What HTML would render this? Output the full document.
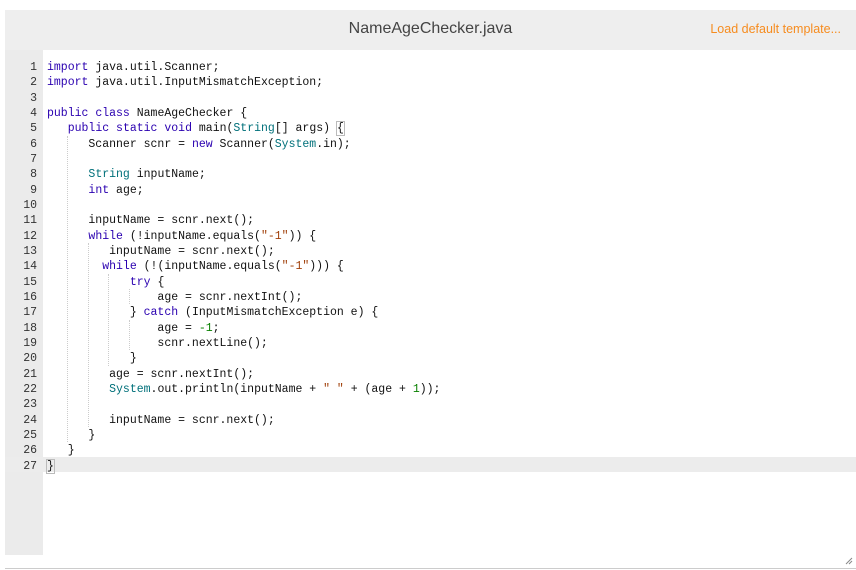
<!DOCTYPE html>
<html><head><style>
body{margin:0;width:856px;height:570px;background:#fff;position:relative;overflow:hidden;font-family:"Liberation Sans",sans-serif}
.hdr{position:absolute;left:5px;top:10px;width:851px;height:40px;background:#eeeeee}
.title{position:absolute;left:0;width:851px;top:10px;text-align:center;font-size:16px;color:#444}
.load{position:absolute;right:15px;top:12px;font-size:12.5px;color:#f68c1f}
.gut{position:absolute;left:5px;top:50px;width:38px;height:505px;background:#ebebeb}
.act{position:absolute;left:5px;top:457px;width:851px;height:15px;background:#ececec}
.code{position:absolute;left:0;top:60px;font-family:"Liberation Mono","DejaVu Sans Mono",monospace;font-size:11.5px;line-height:15.33px;color:#111;white-space:pre}
.ln{display:inline-block;width:37px;text-align:right;color:#333;margin-right:10px}
.k{color:#2a00b0}.t{color:#00707a}.s{color:#a0400a}.n{color:#098000}
.bot{position:absolute;left:5px;top:568px;width:851px;height:1px;background:#ccc}
.br{border:1px solid #bbb;margin:-1px}
.g{position:absolute;width:0;border-left:1px dotted #ccc}
</style></head><body>
<div class="hdr"><div class="title">NameAgeChecker.java</div><div class="load">Load default template...</div></div>
<div class="gut"></div>
<div class="act"></div>
<div class="g" style="left:67px;top:136px;height:306px"></div>
<div class="g" style="left:88px;top:243px;height:184px"></div>
<div class="g" style="left:108px;top:274px;height:92px"></div>
<div class="g" style="left:129px;top:289px;height:15px"></div>
<div class="g" style="left:129px;top:320px;height:30px"></div>
<div class="code"><span class="ln">1</span><span class="k">import</span> java.util.Scanner;
<span class="ln">2</span><span class="k">import</span> java.util.InputMismatchException;
<span class="ln">3</span>
<span class="ln">4</span><span class="k">public</span> <span class="k">class</span> NameAgeChecker {
<span class="ln">5</span>   <span class="k">public</span> <span class="k">static</span> <span class="k">void</span> main(<span class="t">String</span>[] args) <span class="br">{</span>
<span class="ln">6</span>      Scanner scnr = <span class="k">new</span> Scanner(<span class="t">System</span>.in);
<span class="ln">7</span>
<span class="ln">8</span>      <span class="t">String</span> inputName;
<span class="ln">9</span>      <span class="k">int</span> age;
<span class="ln">10</span>
<span class="ln">11</span>      inputName = scnr.next();
<span class="ln">12</span>      <span class="k">while</span> (!inputName.equals(<span class="s">"-1"</span>)) {
<span class="ln">13</span>         inputName = scnr.next();
<span class="ln">14</span>        <span class="k">while</span> (!(inputName.equals(<span class="s">"-1"</span>))) {
<span class="ln">15</span>            <span class="k">try</span> {
<span class="ln">16</span>                age = scnr.nextInt();
<span class="ln">17</span>            } <span class="k">catch</span> (InputMismatchException e) {
<span class="ln">18</span>                age = <span class="n">-1</span>;
<span class="ln">19</span>                scnr.nextLine();
<span class="ln">20</span>            }
<span class="ln">21</span>         age = scnr.nextInt();
<span class="ln">22</span>         <span class="t">System</span>.out.println(inputName + <span class="s">" "</span> + (age + <span class="n">1</span>));
<span class="ln">23</span>
<span class="ln">24</span>         inputName = scnr.next();
<span class="ln">25</span>      }
<span class="ln">26</span>   }
<span class="ln">27</span><span class="br">}</span></div>
<div class="bot"></div>
<svg style="position:absolute;left:845px;top:557px" width="8" height="8"><path d="M7 1L1 7M7 4L4 7" stroke="#888" stroke-width="1"/></svg>
</body></html>
